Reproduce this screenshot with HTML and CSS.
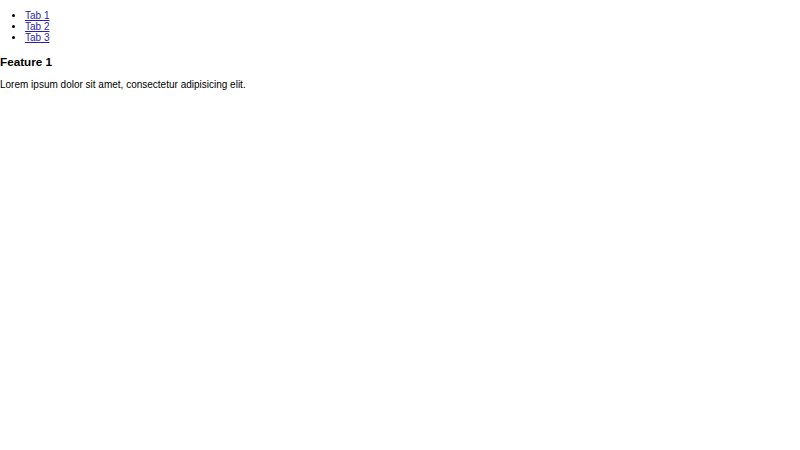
FILE: index.html
```html
<!DOCTYPE html>
<html>
<head>
<meta charset="utf-8">
<link rel="stylesheet" href="styles.css">
</head>
<body class="page">
<ul class="tabs">
<li class="tab"><a class="tab-link" href="#tab1">Tab 1</a></li>
<li class="tab"><a class="tab-link" href="#tab2">Tab 2</a></li>
<li class="tab"><a class="tab-link" href="#tab3">Tab 3</a></li>
</ul>
<div class="panel">
<h3 class="panel-title">Feature 1</h3>
<p class="panel-text">Lorem ipsum dolor sit amet, consectetur adipisicing elit.</p>
</div>
</body>
</html>
```

FILE: styles.css
```css
.page {
  margin: 0;
  font-family: "Liberation Sans", Arial, sans-serif;
  font-size: 10px;
  color: #000;
  background: #fff;
}
.tabs {
  margin: 10px 0;
  padding-left: 25px;
}
.tab-link {
  color: #2a1fb0;
}
.panel-title {
  font-size: 1.17em;
  margin: 1em 0;
}
.panel-text {
  margin: 1em 0;
}
```
